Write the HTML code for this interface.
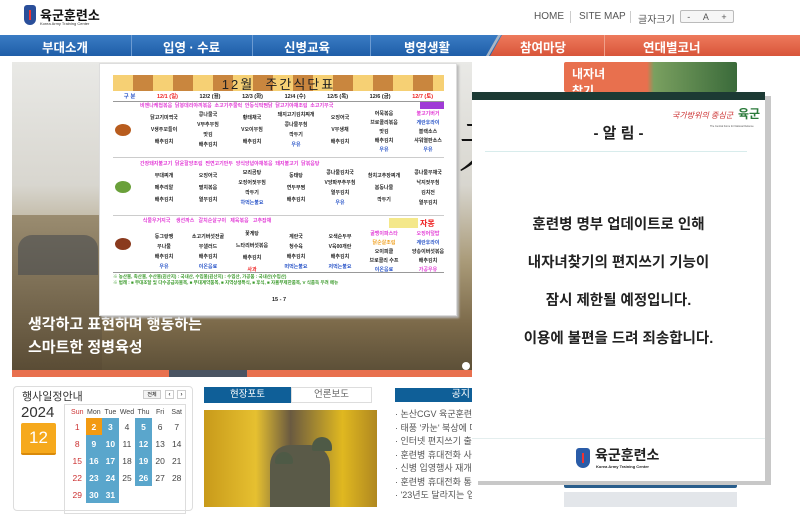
<!DOCTYPE html>
<html><head><meta charset="utf-8">
<style>
*{margin:0;padding:0;box-sizing:border-box}
body{width:800px;height:507px;overflow:hidden;background:#fff;font-family:"Liberation Sans","Noto Sans CJK KR",sans-serif;position:relative}
.a{position:absolute}
.nav{left:0;top:35px;width:800px;height:21px;background:linear-gradient(#3a7cc4,#1f5ea8);}
.nav span{position:absolute;top:2px;color:#fff;font-size:12.5px;font-weight:bold}
.sep{position:absolute;top:0;width:1px;height:21px;background:#6c9bd2}
.mt{font-size:5px;line-height:6px;text-align:center;color:#222;font-weight:bold}
.col{position:absolute;width:44px}
.pk{color:#e23ad6}
.bl{color:#2a55c8}
.cal{table-layout:fixed;width:116px}
.cal td{width:16.5px;height:17px;text-align:center;font-size:8.5px;color:#444;padding:0}
.cal .h{height:12px;font-size:7px}
.cal .s{color:#c33}
.cal .b{background:#5aa6cc;color:#fff;font-weight:bold}
.cal .o{background:#f29a12;color:#fff;font-weight:bold}
.news div{font-size:9px;color:#555;height:13.5px;white-space:nowrap}
.nt{font-size:14.5px;font-weight:bold;color:#222;text-align:center;position:absolute;width:293px;left:0}
</style></head><body>
<!-- header -->
<div class="a" style="left:24px;top:5px;width:12px;height:20px;border-radius:3px 3px 6px 6px;background:#2a4f9a"></div>
<div class="a" style="left:29px;top:10px;width:2px;height:10px;background:#e33"></div>
<div class="a" style="left:40px;top:5px;font-size:13px;font-weight:bold;color:#111">육군훈련소</div>
<div class="a" style="left:40px;top:21px;font-size:4px;color:#333">Korea Army Training Center</div>
<div class="a" style="left:534px;top:11px;font-size:10px;color:#555">HOME</div>
<div class="a" style="left:570px;top:11px;width:1px;height:12px;background:#ccc"></div>
<div class="a" style="left:579px;top:11px;font-size:10px;color:#555">SITE MAP</div>
<div class="a" style="left:630px;top:11px;width:1px;height:12px;background:#ccc"></div>
<div class="a" style="left:638px;top:11px;font-size:10px;color:#555">글자크기</div>
<div class="a" style="left:680px;top:10px;width:54px;height:13px;border:1px solid #bbb;border-radius:2px;background:#f6f6f6;font-size:9px;color:#555;display:flex;justify-content:space-around;align-items:center"><span>-</span><span>A</span><span>+</span></div>
<!-- nav -->
<div class="a nav">
<div class="a" style="left:490px;top:0;width:310px;height:21px;background:linear-gradient(#ee7a5c,#d8553a);clip-path:polygon(12px 0,100% 0,100% 100%,0 100%)"></div>
<div class="a" style="left:486px;top:0;width:16px;height:21px;background:#aab6c4;clip-path:polygon(12px 0,15px 0,3px 100%,0 100%)"></div>
<span style="left:42px">부대소개</span><div class="sep" style="left:131px"></div>
<span style="left:163px">입영 · 수료</span><div class="sep" style="left:252px"></div>
<span style="left:284px">신병교육</span><div class="sep" style="left:370px"></div>
<span style="left:404px">병영생활</span>
<span style="left:520px">참여마당</span><div class="sep" style="left:604px;background:#f0a08a"></div>
<span style="left:643px">연대별코너</span>
</div>
<!-- banner -->
<div class="a" style="left:12px;top:62px;width:460px;height:308px;background:linear-gradient(#e9e9e6 0%,#d8d6cf 40%,#a99a78 65%,#7c6a4a 85%,#5d5038 100%)"></div>
<div class="a" style="left:12px;top:215px;width:90px;height:155px;background:linear-gradient(#9a8c70,#5a4c35)"></div>
<div class="a" style="left:18px;top:235px;width:80px;height:40px;background:#4a4c50;border-radius:14px 14px 0 0;opacity:.6"></div>
<div class="a" style="left:28px;top:313px;font-size:15px;font-weight:bold;color:#fff">생각하고 표현하며 행동하는</div>
<div class="a" style="left:28px;top:336px;font-size:15px;font-weight:bold;color:#fff">스마트한 정병육성</div>
<div class="a" style="left:12px;top:370px;width:460px;height:7px;background:#e8704e"></div>
<div class="a" style="left:169px;top:370px;width:78px;height:7px;background:#4a5462"></div>
<div class="a" style="left:462px;top:362px;width:8px;height:8px;border-radius:50%;background:#fff"></div>
<div class="a" style="left:458px;top:90px;font-size:70px;color:#111;font-family:'Noto Serif CJK SC',serif">未</div>
<!-- menu popup -->
<div class="a" style="left:99px;top:63px;width:358px;height:253px;background:#fff;border:1px solid #ddd;box-shadow:2px 2px 2px #bbb">
 <div class="a" style="left:13px;top:11px;width:331px;height:16px;background:repeating-linear-gradient(90deg,#f6d074 0 20px,#c9863e 20px 40px)"></div>
 <div class="a" style="left:13px;top:10px;width:331px;text-align:center;font-size:13px;color:#222;letter-spacing:2px">12월 &nbsp;주간식단표</div>
 <div class="a mt" style="left:13px;top:30px;width:331px;display:flex;justify-content:space-around;font-size:5.5px"><span class="bl">구 분</span><span style="color:#e22">12/1 (일)</span><span>12/2 (월)</span><span>12/3 (화)</span><span>12/4 (수)</span><span>12/5 (목)</span><span>12/6 (금)</span><span style="color:#e22">12/7 (토)</span></div>
 <div class="a" style="left:13px;top:37px;width:331px;height:1px;background:#999"></div>
 <div class="a" style="left:13px;top:93px;width:331px;height:1px;background:#ccc"></div>
 <div class="a" style="left:13px;top:151px;width:331px;height:1px;background:#ccc"></div>
 <div class="a" style="left:13px;top:208px;width:331px;height:1px;background:#999"></div>
 <div class="a mt pk" style="left:40px;top:39px;width:300px;text-align:left">비엔나케첩볶음 &nbsp;닭봉데리야끼볶음 &nbsp;소고기주물럭 &nbsp;안동식떡찜닭 &nbsp;닭고기야채조림 &nbsp;소고기무국</div>
 <div class="a mt pk" style="left:40px;top:97px;width:300px;text-align:left">간장돼지불고기 &nbsp;닭윤할양조림 &nbsp;찐연고기만두 &nbsp;양식양념야채볶음 &nbsp;돼지불고기 &nbsp;닭볶음탕</div>
 <div class="a mt pk" style="left:40px;top:154px;width:300px;text-align:left">&nbsp;&nbsp;식물우거지국 &nbsp;&nbsp;&nbsp;생선까스 &nbsp;&nbsp;갈치순살구이 &nbsp;&nbsp;제육볶음 &nbsp;&nbsp;고추잡채</div>
 <div class="a" style="left:320px;top:38px;width:24px;height:7px;background:#a03ad6"></div>
 <div class="a" style="left:289px;top:154px;width:29px;height:10px;background:#f4e88a"></div>
 <div class="a" style="left:320px;top:154px;font-size:8px;color:#e22;font-weight:bold">자몽</div>
 <div class="a" style="left:15px;top:60px;width:16px;height:12px;border-radius:50%;background:#b85c1e"></div>
 <div class="a" style="left:15px;top:117px;width:16px;height:12px;border-radius:50%;background:#6aa03a"></div>
 <div class="a" style="left:15px;top:174px;width:16px;height:12px;border-radius:50%;background:#8a3a1e"></div>
 <div class="col mt" style="left:42px;top:48px;line-height:12px">닭고기미역국<br>V생주꼬들이<br>배추김치</div>
 <div class="col mt" style="left:86px;top:46px;line-height:10px">콩나물국<br>V부추무침<br>맛김<br>배추김치</div>
 <div class="col mt" style="left:130px;top:48px;line-height:12px">황태채국<br>V오이무침<br>배추김치</div>
 <div class="col mt" style="left:174px;top:46px;line-height:10px">돼지고기김치찌개<br>콩나물무침<br>깍두기<br><span class="bl">우유</span></div>
 <div class="col mt" style="left:218px;top:48px;line-height:12px">오징어국<br>V무생채<br>배추김치</div>
 <div class="col mt" style="left:262px;top:46px;line-height:9px">어묵볶음<br>브로콜리볶음<br>맛김<br>배추김치<br><span class="bl">우유</span></div>
 <div class="col mt" style="left:306px;top:46px;line-height:9px"><span class="pk">불고기버거</span><br><span class="bl">게란후라이</span><br>블랙소스<br>샤워열판소스<br><span class="bl">우유</span></div>
 <div class="col mt" style="left:42px;top:106px;line-height:12px">부대찌개<br>메추리알<br>배추김치</div>
 <div class="col mt" style="left:86px;top:106px;line-height:12px">오징어국<br>멸치볶음<br>열무김치</div>
 <div class="col mt" style="left:130px;top:104px;line-height:10px">모리곰탕<br>오징어젓무침<br>깍두기<br><span class="bl">하먹는불요</span></div>
 <div class="col mt" style="left:174px;top:106px;line-height:12px">동태탕<br>연두부찜<br>배추김치</div>
 <div class="col mt" style="left:218px;top:104px;line-height:10px">콩나물김치국<br>V양파부추무침<br>열무김치<br><span class="bl">우유</span></div>
 <div class="col mt" style="left:262px;top:106px;line-height:12px">참치고추장찌개<br>봄동나물<br>깍두기</div>
 <div class="col mt" style="left:306px;top:104px;line-height:10px">콩나물무채국<br>낙지젓무침<br>김치전<br>열무김치</div>
 <div class="col mt" style="left:42px;top:168px;line-height:10px">동그랑땡<br>무나물<br>배추김치<br><span class="bl">우유</span></div>
 <div class="col mt" style="left:86px;top:168px;line-height:10px">소고기버섯전골<br>무샐러드<br>배추김치<br><span class="bl">이온음료</span></div>
 <div class="col mt" style="left:130px;top:164px;line-height:12px">꽃게탕<br>느타리버섯볶음<br>배추김치<br><span style="color:#e22">사과</span></div>
 <div class="col mt" style="left:174px;top:168px;line-height:10px">계란국<br>청수육<br>배추김치<br><span class="bl">떠먹는불요</span></div>
 <div class="col mt" style="left:218px;top:168px;line-height:10px">오색순두부<br>V육00개란<br>배추김치<br><span class="bl">저먹는불요</span></div>
 <div class="col mt" style="left:262px;top:166px;line-height:9px"><span class="pk">골뱅이파스타</span><br><span style="color:#f0a020">닭순살조림</span><br>오이피클<br>브로콜리 수프<br><span class="bl">이온음료</span></div>
 <div class="col mt" style="left:306px;top:166px;line-height:9px"><span class="pk">오징어덮밥</span><br><span class="bl">계란후라이</span><br>양송이버섯볶음<br>배추김치<br><span class="pk">가공우유</span></div>
 <div class="a mt" style="left:13px;top:210px;color:#3a9a2a;font-size:4.5px;text-align:left;width:330px">※ 농산물, 축산물, 수산물(원산지) : 국내산, 수입물(원산지) : 수입산, 가공품 : 국내산(수입산)<br>※ 범례 : ■ 부대조달 및 다수공급자물목, ■ 부대계약품목, ■ 지역상생특식, ■ 후식, ■ 자율무제한품목, V 식품득 우려 메뉴</div>
 <div class="a mt" style="left:0;top:233px;width:358px;font-size:5.5px">15 - 7</div>
</div>
<!-- right banner -->
<div class="a" style="left:564px;top:62px;width:173px;height:30px;background:linear-gradient(90deg,#e8704e 0 48%,#7aa060 52%,#3a6a3a);border-radius:2px"></div>
<div class="a" style="left:572px;top:65px;font-size:12px;font-weight:bold;color:#fff">내자녀<br>찾기</div>
<div class="a" style="left:564px;top:470px;width:173px;height:18px;background:#2a5e8c;border-radius:2px"></div>
<div class="a" style="left:564px;top:492px;width:173px;height:15px;background:#e3e6ea"></div>
<!-- notice popup -->
<div class="a" style="left:472px;top:92px;width:293px;height:389px;background:#fff;box-shadow:6px 4px 0 #c8c8c8">
 <div class="a" style="left:0;top:0;width:293px;height:8px;background:#1c3a34"></div>
 <div class="a" style="left:0;top:30px;width:293px;text-align:center;font-size:15px;color:#222;font-weight:bold">- 알 림 -</div>
 <div class="a" style="left:200px;top:18px;font-size:8px;color:#c33;font-style:italic">국가방위의 중심군</div>
 <div class="a" style="left:266px;top:13px;font-size:12px;color:#2a7a3a;font-weight:bold">육군</div>
 <div class="a" style="left:238px;top:33px;font-size:2.5px;color:#555">The Central Force for National Defense</div>
 <div class="a" style="left:13px;top:59px;width:262px;height:1px;background:#d8ecec"></div>
 <div class="nt" style="top:121px">훈련병 명부 업데이트로 인해</div>
 <div class="nt" style="top:159px">내자녀찾기의 편지쓰기 기능이</div>
 <div class="nt" style="top:197px">잠시 제한될 예정입니다.</div>
 <div class="nt" style="top:235px">이용에 불편을 드려 죄송합니다.</div>
 <div class="a" style="left:0;top:346px;width:293px;height:1px;background:#e4eeee"></div>
 <div class="a" style="left:104px;top:356px;width:14px;height:20px;border-radius:3px 3px 7px 7px;background:#2a5ca8"></div>
 <div class="a" style="left:110px;top:361px;width:2px;height:10px;background:#e33"></div>
 <div class="a" style="left:123px;top:353px;font-size:14px;font-weight:bold;color:#222">육군훈련소</div>
 <div class="a" style="left:124px;top:372px;font-size:4px;color:#222;font-weight:bold">Korea Army Training Center</div>
</div>
<!-- calendar -->
<div class="a" style="left:13px;top:386px;width:180px;height:125px;border:1px solid #ddd;border-radius:4px"></div>
<div class="a" style="left:22px;top:388px;font-size:11px;color:#333">행사일정안내</div>
<div class="a" style="left:143px;top:390px;width:18px;height:9px;border:1px solid #ccc;font-size:5px;text-align:center;line-height:8px;background:#f4f4f4">전체</div>
<div class="a" style="left:165px;top:390px;width:9px;height:9px;border:1px solid #ccc;font-size:6px;text-align:center;line-height:8px">‹</div>
<div class="a" style="left:177px;top:390px;width:9px;height:9px;border:1px solid #ccc;font-size:6px;text-align:center;line-height:8px">›</div>
<div class="a" style="left:21px;top:404px;font-size:15px;color:#333">2024</div>
<div class="a" style="left:21px;top:423px;width:35px;height:32px;background:#f6a91c;border-radius:2px;color:#fff;font-size:17px;text-align:center;line-height:30px;border-bottom:2px solid #d98a0a">12</div>
<div class="a" style="left:64px;top:404px;width:122px;height:110px;border:1px solid #ddd"></div>
<table class="a cal" style="left:69px;top:406px;border-collapse:collapse">
<tr><td class="h s">Sun</td><td class="h">Mon</td><td class="h">Tue</td><td class="h">Wed</td><td class="h">Thu</td><td class="h">Fri</td><td class="h">Sat</td></tr>
<tr><td class="s">1</td><td class="o">2</td><td class="b">3</td><td>4</td><td class="b">5</td><td>6</td><td>7</td></tr>
<tr><td class="s">8</td><td class="b">9</td><td class="b">10</td><td>11</td><td class="b">12</td><td>13</td><td>14</td></tr>
<tr><td class="s">15</td><td class="b">16</td><td class="b">17</td><td>18</td><td class="b">19</td><td>20</td><td>21</td></tr>
<tr><td class="s">22</td><td class="b">23</td><td class="b">24</td><td>25</td><td class="b">26</td><td>27</td><td>28</td></tr>
<tr><td class="s">29</td><td class="b">30</td><td class="b">31</td><td></td><td></td><td></td><td></td></tr>
</table>
<!-- photos -->
<div class="a" style="left:204px;top:387px;width:87px;height:16px;background:#0f5f98;color:#fff;font-size:9.5px;text-align:center;line-height:16px">현장포토</div>
<div class="a" style="left:291px;top:387px;width:81px;height:16px;border:1px solid #ddd;color:#666;font-size:9.5px;text-align:center;line-height:14px">언론보도</div>
<div class="a" style="left:204px;top:410px;width:173px;height:97px;background:linear-gradient(90deg,#c89a1a,#e6c030 30%,#6a5a40 50%,#e0b820 80%,#b08820)"></div>
<div class="a" style="left:270px;top:445px;width:60px;height:62px;background:#5a5a48;border-radius:20px 20px 0 0"></div>
<div class="a" style="left:312px;top:437px;width:20px;height:14px;background:#4e5a46;border-radius:10px 10px 2px 2px"></div>
<div class="a" style="left:275px;top:452px;width:18px;height:12px;background:#4e5a46;border-radius:9px 9px 2px 2px"></div>
<!-- notice list -->
<div class="a" style="left:395px;top:388px;width:77px;height:14px;background:#0f5f98;color:#fff;font-size:10px;text-align:right;padding-right:2px;line-height:14px">공지</div>
<div class="a news" style="left:395px;top:407px;width:77px;overflow:hidden">
<div>· 논산CGV 육군훈련소</div><div>· 태풍 '카눈' 북상에 따</div><div>· 인터넷 편지쓰기 출력</div><div>· 훈련병 휴대전화 사용</div><div>· 신병 입영행사 재개</div><div>· 훈련병 휴대전화 통제</div><div>· '23년도 달라지는 업무</div>
</div>
</body></html>
